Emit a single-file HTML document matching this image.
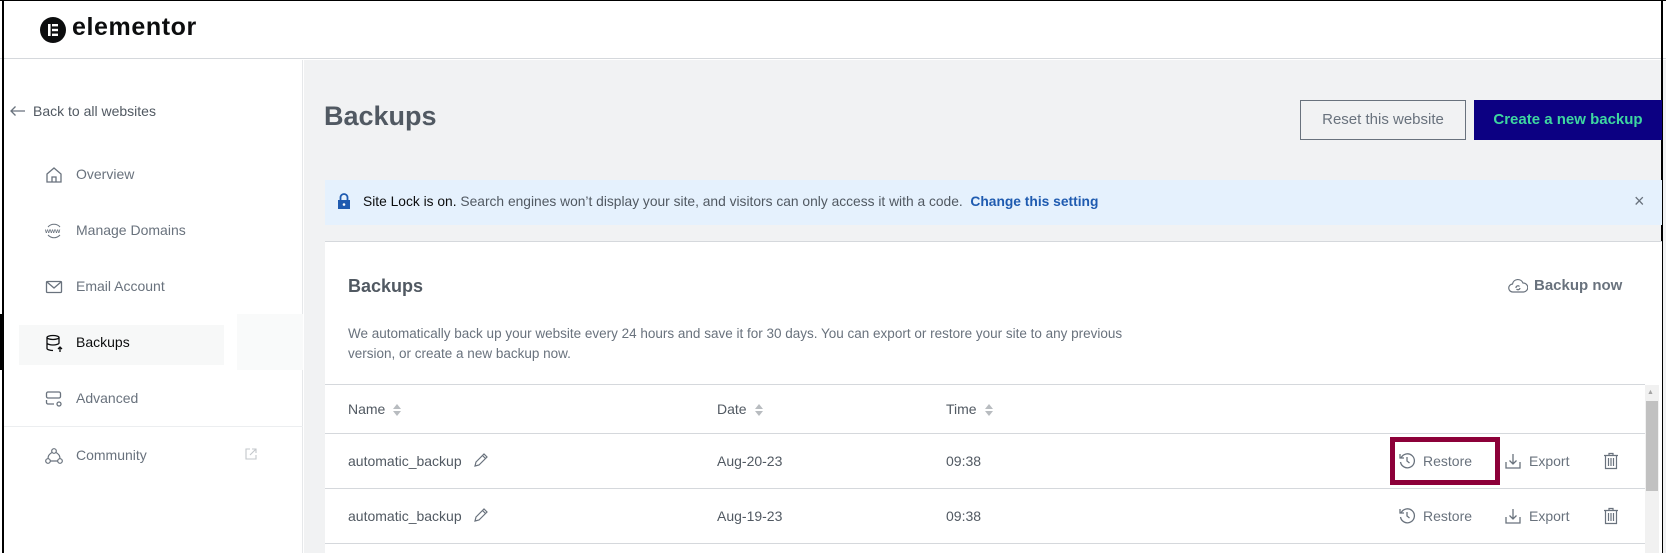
<!DOCTYPE html>
<html><head><meta charset="utf-8"><style>
*{margin:0;padding:0;box-sizing:border-box}
body{width:1666px;height:553px;overflow:hidden;background:#fff;font-family:"Liberation Sans",sans-serif;position:relative;color:#69727d}
.abs{position:absolute}
.hdr{left:0;top:0;width:1666px;height:59px;border-bottom:1px solid #d5d8dc;background:#fff}
.side{left:0;top:60px;width:303px;height:493px;background:#fff;border-right:1px solid #e6e8ea}
.main{left:304px;top:60px;width:1362px;height:493px;background:#f1f2f3}
.nav{left:76px;font-size:14px;color:#69727d}
.ico{left:44px;width:20px;height:20px}
.card{left:325px;top:241px;width:1337px;height:312px;background:#fff;border-top:1px solid #d5d8dc}
.row{left:325px;width:1320px;height:1px;background:#d5d8dc}
.cell{font-size:14px;color:#515962}
.srt{display:inline-block;vertical-align:middle;margin-left:8px}
</style></head><body>
<div class="abs hdr"></div>
<svg class="abs" style="left:40px;top:17px" width="26" height="26" viewBox="0 0 26 26"><circle cx="13" cy="13" r="13" fill="#0c0d0e"/><rect x="8" y="7" width="2.6" height="12" fill="#fff"/><rect x="12" y="7" width="6" height="2.4" fill="#fff"/><rect x="12" y="11.8" width="6" height="2.4" fill="#fff"/><rect x="12" y="16.6" width="6" height="2.4" fill="#fff"/></svg>
<div class="abs" style="left:72px;top:13px;font-size:25px;font-weight:bold;color:#0c0d0e;letter-spacing:0.6px">elementor</div>
<div class="abs side"></div>
<div class="abs main"></div>
<div class="abs" style="left:2px;top:0;width:2px;height:553px;background:#000"></div>
<div class="abs" style="left:1661px;top:0;width:2px;height:553px;background:#000"></div>
<div class="abs" style="left:0;top:0;width:1666px;height:1px;background:#000"></div>
<svg class="abs" style="left:9px;top:105px" width="17" height="12" viewBox="0 0 17 12" fill="none" stroke="#69727d" stroke-width="1.3"><path d="M16 6H2 M6.5 1.5L2 6l4.5 4.5"/></svg>
<div class="abs" style="left:33px;top:103px;font-size:14px;color:#515962">Back to all websites</div>
<div class="abs" style="left:19px;top:325px;width:205px;height:40px;background:#f7f8f8"></div>
<div class="abs" style="left:237px;top:314px;width:66px;height:56px;background:#f9fafa"></div>
<div class="abs" style="left:0;top:314px;width:3px;height:56px;background:#000"></div>
<svg class="abs ico" style="top:165px" viewBox="0 0 20 20" fill="none" stroke="#69727d" stroke-width="1.3"><path d="M3 9L10 3l7 6v8H3z M8 17v-5h4v5"/></svg>
<div class="abs nav" style="top:166px">Overview</div>
<svg class="abs ico" style="top:221px" viewBox="0 0 20 20" fill="none" stroke="#69727d" stroke-width="1"><path d="M4 6a8 8 0 0112 0 M4 14a8 8 0 0012 0"/><text x="1" y="12" font-size="6.5" font-weight="bold" fill="#69727d" stroke="none">www</text></svg>
<div class="abs nav" style="top:222px">Manage Domains</div>
<svg class="abs ico" style="top:277px" viewBox="0 0 20 20" fill="none" stroke="#69727d" stroke-width="1.3"><rect x="2.5" y="4.5" width="15" height="11" rx="1"/><path d="M3 5l7 6 7-6"/></svg>
<div class="abs nav" style="top:278px">Email Account</div>
<svg class="abs ico" style="top:333px" viewBox="0 0 20 20" fill="none" stroke="#0c0d0e" stroke-width="1.3"><ellipse cx="9" cy="4.5" rx="6" ry="2"/><path d="M3 4.5v11c0 1 3 2 6 2 M15 4.5v6 M3 10c0 1 3 2 6 2s6-1 6-2 M16 19v-5 M14 16l2-2 2 2"/></svg>
<div class="abs nav" style="top:334px;color:#0c0d0e">Backups</div>
<svg class="abs ico" style="top:389px" viewBox="0 0 20 20" fill="none" stroke="#69727d" stroke-width="1.3"><rect x="2.5" y="3" width="14" height="6" rx="1.5"/><path d="M10 15H4a1.5 1.5 0 01-1.5-1.5V11"/><circle cx="15" cy="15" r="2"/></svg>
<div class="abs nav" style="top:390px">Advanced</div>
<div class="abs" style="left:4px;top:426px;width:299px;height:1px;background:#eceef0"></div>
<svg class="abs ico" style="top:446px" viewBox="0 0 20 20" fill="none" stroke="#69727d" stroke-width="1.2"><circle cx="10" cy="5" r="2.3"/><circle cx="4" cy="15" r="2.3"/><circle cx="16" cy="15" r="2.3"/><path d="M8 6.5C5 8 4 10 4 12.7 M12 6.5c3 1.5 4 3.5 4 6.2 M6.3 15h7.4"/></svg>
<div class="abs nav" style="top:447px">Community</div>
<svg class="abs" style="left:244px;top:447px" width="14" height="14" viewBox="0 0 14 14" fill="none" stroke="#c3c7cb" stroke-width="1.1"><path d="M6 2H2v10h10V8 M8 2h4v4 M12 2L6 8"/></svg>

<div class="abs" style="left:324px;top:101px;font-size:27px;font-weight:bold;color:#515962">Backups</div>
<div class="abs" style="left:1300px;top:100px;width:166px;height:40px;border:1px solid #69727d;font-size:15px;color:#69727d;text-align:center;line-height:38px">Reset this website</div>
<div class="abs" style="left:1474px;top:100px;width:188px;height:40px;background:#0c0082;font-size:15px;font-weight:bold;color:#3ed6a0;text-align:center;line-height:40px">Create a new backup</div>

<div class="abs" style="left:325px;top:180px;width:1337px;height:45px;background:#e5f1fd"></div>
<svg class="abs" style="left:337px;top:193px" width="14" height="17" viewBox="0 0 14 17"><path d="M3.5 7V4.5a3.5 3.5 0 017 0V7" fill="none" stroke="#1f5bb0" stroke-width="1.8"/><rect x="1" y="7" width="12" height="9" fill="#1f5bb0"/><circle cx="7" cy="11.5" r="1.3" fill="#fff"/></svg>
<div class="abs" style="left:363px;top:194px;font-size:13.8px;color:#515962;white-space:nowrap"><span style="color:#0c0d0e">Site Lock is on.</span> Search engines won’t display your site, and visitors can only access it with a code. &nbsp;<span style="color:#1f5bb0;font-weight:bold">Change this setting</span></div>
<div class="abs" style="left:1634px;top:191px;font-size:18px;color:#69727d">&#215;</div>

<div class="abs card"></div>
<div class="abs" style="left:348px;top:276px;font-size:18px;font-weight:bold;color:#515962">Backups</div>
<svg class="abs" style="left:1508px;top:278px" width="20" height="16" viewBox="0 0 20 16" fill="none" stroke="#69727d" stroke-width="1.2"><path d="M5 14a4 4 0 01-.5-8A5.5 5.5 0 0115 5a4.5 4.5 0 01.5 9z"/><path d="M8 10a2 2 0 013.5-1.5M12 10a2 2 0 01-3.5 1"/></svg>
<div class="abs" style="left:1534px;top:277px;font-size:15px;font-weight:bold;color:#69727d">Backup now</div>
<div class="abs" style="left:348px;top:324px;font-size:13.5px;line-height:20px;color:#69727d;width:820px">We automatically back up your website every 24 hours and save it for 30 days. You can export or restore your site to any previous version, or create a new backup now.</div>
<div class="abs row" style="top:384px"></div>
<div class="abs cell" style="left:348px;top:401px">Name<svg class="srt" width="8" height="12" viewBox="0 0 8 12"><path d="M0 5L4 0l4 5z M0 7l4 5 4-5z" fill="#b8bcc0"/></svg></div>
<div class="abs cell" style="left:717px;top:401px">Date<svg class="srt" width="8" height="12" viewBox="0 0 8 12"><path d="M0 5L4 0l4 5z M0 7l4 5 4-5z" fill="#b8bcc0"/></svg></div>
<div class="abs cell" style="left:946px;top:401px">Time<svg class="srt" width="8" height="12" viewBox="0 0 8 12"><path d="M0 5L4 0l4 5z M0 7l4 5 4-5z" fill="#b8bcc0"/></svg></div>
<div class="abs row" style="top:433px"></div>
<div class="abs row" style="top:488px"></div>
<div class="abs row" style="top:543px"></div>
<div class="abs" style="left:1645px;top:385px;width:14px;height:168px;background:#f1f1f1"></div>
<div class="abs" style="left:1646px;top:401px;width:12px;height:90px;background:#c1c1c1"></div>
<div class="abs" style="left:1647px;top:389px;font-size:7px;color:#a3a3a3">&#9650;</div>

<div class="abs" style="left:1390px;top:437px;width:110px;height:48px;border:5px solid #8c0039"></div>

<div class="abs cell" style="left:348px;top:453px">automatic_backup</div>
<div class="abs cell" style="left:717px;top:453px">Aug-20-23</div>
<div class="abs cell" style="left:946px;top:453px">09:38</div>
<div class="abs cell" style="left:348px;top:508px">automatic_backup</div>
<div class="abs cell" style="left:717px;top:508px">Aug-19-23</div>
<div class="abs cell" style="left:946px;top:508px">09:38</div>

<svg class="abs" style="left:472px;top:451px" width="18" height="18" viewBox="0 0 18 18" fill="none" stroke="#69727d" stroke-width="1.2"><path d="M3 15l1-4 8-8 3 3-8 8z M10.5 4.5l3 3"/></svg>
<svg class="abs" style="left:472px;top:506px" width="18" height="18" viewBox="0 0 18 18" fill="none" stroke="#69727d" stroke-width="1.2"><path d="M3 15l1-4 8-8 3 3-8 8z M10.5 4.5l3 3"/></svg>

<svg class="abs" style="left:1398px;top:452px" width="18" height="18" viewBox="0 0 18 18" fill="none" stroke="#69727d" stroke-width="1.3"><path d="M3 6a7 7 0 11-.5 4 M2 2v4h4 M9 5v4l2.5 2"/></svg>
<div class="abs cell" style="left:1423px;top:453px;color:#69727d">Restore</div>
<svg class="abs" style="left:1504px;top:452px" width="18" height="18" viewBox="0 0 18 18" fill="none" stroke="#69727d" stroke-width="1.3"><path d="M2 10v6h14v-6 M9 2v10 M5.5 8.5L9 12l3.5-3.5"/></svg>
<div class="abs cell" style="left:1529px;top:453px;color:#69727d">Export</div>
<svg class="abs" style="left:1603px;top:452px" width="16" height="18" viewBox="0 0 16 18" fill="none" stroke="#69727d" stroke-width="1.2"><path d="M1 3.5h14 M6 3.5V1.5h4v2 M2.5 3.5v13h11v-13 M5.5 6v8 M8 6v8 M10.5 6v8"/></svg>

<svg class="abs" style="left:1398px;top:507px" width="18" height="18" viewBox="0 0 18 18" fill="none" stroke="#69727d" stroke-width="1.3"><path d="M3 6a7 7 0 11-.5 4 M2 2v4h4 M9 5v4l2.5 2"/></svg>
<div class="abs cell" style="left:1423px;top:508px;color:#69727d">Restore</div>
<svg class="abs" style="left:1504px;top:507px" width="18" height="18" viewBox="0 0 18 18" fill="none" stroke="#69727d" stroke-width="1.3"><path d="M2 10v6h14v-6 M9 2v10 M5.5 8.5L9 12l3.5-3.5"/></svg>
<div class="abs cell" style="left:1529px;top:508px;color:#69727d">Export</div>
<svg class="abs" style="left:1603px;top:507px" width="16" height="18" viewBox="0 0 16 18" fill="none" stroke="#69727d" stroke-width="1.2"><path d="M1 3.5h14 M6 3.5V1.5h4v2 M2.5 3.5v13h11v-13 M5.5 6v8 M8 6v8 M10.5 6v8"/></svg>
</body></html>
